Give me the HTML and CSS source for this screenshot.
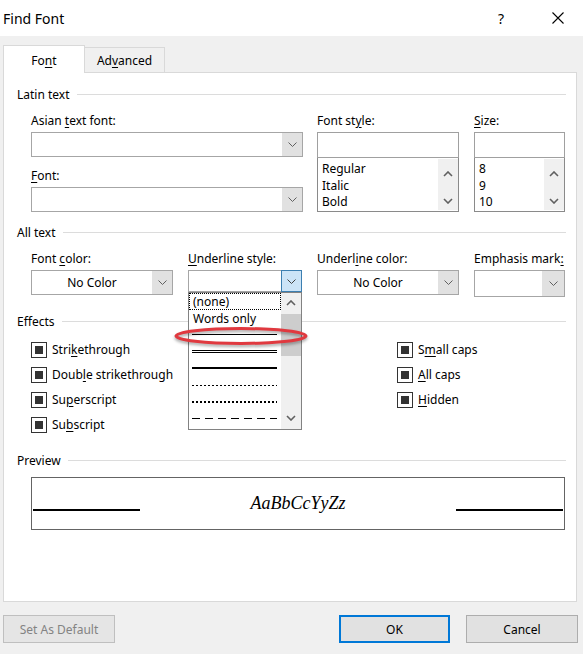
FILE: index.html
```html
<!DOCTYPE html>
<html>
<head>
<meta charset="utf-8">
<title>Find Font</title>
<link rel="stylesheet" href="styles.css">
</head>
<body>
<div class="titlebar">
  <span class="title">Find Font</span>
  <span class="help">?</span>
  <svg class="close" width="12" height="12" viewBox="0 0 12 12"><path d="M0.5 0.5L11.5 11.5M11.5 0.5L0.5 11.5" stroke="#000" stroke-width="1.1" fill="none"/></svg>
</div>

<div class="tabs">
  <div class="tab active">Fo<u>n</u>t</div>
  <div class="tab">Ad<u>v</u>anced</div>
</div>

<div class="panel">
  <div class="group-head"><span>Latin text</span><i></i></div>
  <div class="latin">
    <div class="c1">
      <label>Asian <u>t</u>ext font:</label>
      <div class="combo"><span class="val"></span><span class="cbtn"><svg width="9" height="5" viewBox="0 0 9 5"><path d="M0.5 0.5L4.5 4.5L8.5 0.5" fill="none" stroke="#606060"/></svg></span></div>
      <label class="second"><u>F</u>ont:</label>
      <div class="combo"><span class="val"></span><span class="cbtn"><svg width="9" height="5" viewBox="0 0 9 5"><path d="M0.5 0.5L4.5 4.5L8.5 0.5" fill="none" stroke="#606060"/></svg></span></div>
    </div>
    <div class="c2">
      <label>Font st<u>y</u>le:</label>
      <div class="edit"></div>
      <div class="list">
        <div class="items"><div>Regular</div><div>Italic</div><div>Bold</div></div>
        <div class="sb">
          <svg width="10" height="6" viewBox="0 0 10 6"><path d="M1 5L5 1L9 5" fill="none" stroke="#606060" stroke-width="1.6"/></svg>
          <svg width="10" height="6" viewBox="0 0 10 6"><path d="M1 1L5 5L9 1" fill="none" stroke="#606060" stroke-width="1.6"/></svg>
        </div>
      </div>
    </div>
    <div class="c3">
      <label><u>S</u>ize:</label>
      <div class="edit"></div>
      <div class="list">
        <div class="items"><div>8</div><div>9</div><div>10</div></div>
        <div class="sb">
          <svg width="10" height="6" viewBox="0 0 10 6"><path d="M1 5L5 1L9 5" fill="none" stroke="#606060" stroke-width="1.6"/></svg>
          <svg width="10" height="6" viewBox="0 0 10 6"><path d="M1 1L5 5L9 1" fill="none" stroke="#606060" stroke-width="1.6"/></svg>
        </div>
      </div>
    </div>
  </div>

  <div class="group-head gh-all"><span>All text</span><i></i></div>
  <div class="alltext">
    <div class="a1">
      <label>Font <u>c</u>olor:</label>
      <div class="combo"><span class="val">No Color</span><span class="cbtn"><svg width="9" height="5" viewBox="0 0 9 5"><path d="M0.5 0.5L4.5 4.5L8.5 0.5" fill="none" stroke="#606060"/></svg></span></div>
    </div>
    <div class="a2">
      <label><u>U</u>nderline style:</label>
      <div class="combo open"><span class="val"></span><span class="cbtn"><svg width="9" height="5" viewBox="0 0 9 5"><path d="M0.5 0.5L4.5 4.5L8.5 0.5" fill="none" stroke="#404040"/></svg></span>
        <div class="dropdown">
          <div class="dd-items">
            <div class="dd-row focus">(none)</div>
            <div class="dd-row">Words only</div>
            <div class="dd-row ln"><i class="l-single"></i></div>
            <div class="dd-row ln"><i class="l-double"></i></div>
            <div class="dd-row ln"><i class="l-thick"></i></div>
            <div class="dd-row ln"><i class="l-dot"></i></div>
            <div class="dd-row ln"><i class="l-dot2"></i></div>
            <div class="dd-row ln"><i class="l-dash"></i></div>
          </div>
          <div class="dd-sb">
            <svg width="10" height="6" viewBox="0 0 10 6"><path d="M1 5L5 1L9 5" fill="none" stroke="#606060" stroke-width="1.6"/></svg>
            <span class="thumb"></span>
            <span class="fill"></span>
            <svg width="10" height="6" viewBox="0 0 10 6"><path d="M1 1L5 5L9 1" fill="none" stroke="#606060" stroke-width="1.6"/></svg>
          </div>
        </div>
        <svg class="ring" width="136" height="22" viewBox="0 0 136 22"><ellipse cx="67" cy="9" rx="65" ry="7.5" fill="none" stroke="#e0393f" stroke-width="3"/></svg>
      </div>
    </div>
    <div class="a3">
      <label>Underl<u>i</u>ne color:</label>
      <div class="combo"><span class="val">No Color</span><span class="cbtn"><svg width="9" height="5" viewBox="0 0 9 5"><path d="M0.5 0.5L4.5 4.5L8.5 0.5" fill="none" stroke="#606060"/></svg></span></div>
    </div>
    <div class="a4">
      <label>Emphasis mark<u>:</u></label>
      <div class="combo emph"><span class="val"></span><span class="cbtn"><svg width="9" height="5" viewBox="0 0 9 5"><path d="M0.5 0.5L4.5 4.5L8.5 0.5" fill="none" stroke="#606060"/></svg></span></div>
    </div>
  </div>

  <div class="group-head gh-eff"><span>Effects</span><i></i></div>
  <div class="effects">
    <div class="cbcol">
      <div class="cb"><span class="box"><i></i></span><span>Stri<u>k</u>ethrough</span></div>
      <div class="cb"><span class="box"><i></i></span><span>Doub<u>l</u>e strikethrough</span></div>
      <div class="cb"><span class="box"><i></i></span><span>Su<u>p</u>erscript</span></div>
      <div class="cb"><span class="box"><i></i></span><span>Su<u>b</u>script</span></div>
    </div>
    <div class="cbcol">
      <div class="cb"><span class="box"><i></i></span><span>S<u>m</u>all caps</span></div>
      <div class="cb"><span class="box"><i></i></span><span><u>A</u>ll caps</span></div>
      <div class="cb"><span class="box"><i></i></span><span><u>H</u>idden</span></div>
    </div>
  </div>

  <div class="group-head gh-prev"><span>Preview</span><i></i></div>
  <div class="preview">
    <i class="pl"></i>
    <span class="sample">AaBbCcYyZz</span>
    <i class="pl"></i>
  </div>
</div>

<div class="footer">
  <div class="button disabled">Set As Default</div>
  <span class="spacer"></span>
  <div class="button ok">OK</div>
  <div class="button">Cancel</div>
</div>
</body>
</html>
```

FILE: styles.css
```css
* { box-sizing: border-box; }
html, body { margin: 0; padding: 0; }
body {
  width: 583px;
  height: 654px;
  overflow: hidden;
  background: #f0f0f0;
  font-family: "Segoe UI", "Noto Sans", "Open Sans", sans-serif;
  font-size: 12px;
  color: #000;
}
u { text-decoration: underline; text-underline-offset: 2px; text-decoration-thickness: 1px; }

/* title bar */
.titlebar {
  height: 36px;
  background: #fff;
  display: flex;
  align-items: center;
  padding-left: 3px;
}
.title { flex: 1; font-size: 14px; }
.help { font-size: 14px; margin-right: 48px; }
.close { margin-right: 19px; }

/* tabs */
.tabs {
  display: flex;
  padding-left: 3px;
  margin-top: 9px;
  height: 27px;
}
.tab {
  width: 80px;
  height: 25px;
  margin-top: 2px;
  border: 1px solid #d9d9d9;
  border-left: none;
  border-bottom: none;
  background: #f0f0f0;
  text-align: center;
  line-height: 23px;
  padding-top: 1px;
}
.tab.active {
  width: 82px;
  height: 28px;
  margin-top: 0;
  border-left: 1px solid #d9d9d9;
  background: #fff;
  line-height: 27px;
  position: relative;
  z-index: 2;
}

/* panel */
.panel {
  position: relative;
  z-index: 1;
  margin-left: 3px;
  width: 574px;
  height: 530px;
  background: #fff;
  border: 1px solid #d9d9d9;
  padding: 13px 10px 0 13px;
}
.group-head {
  display: flex;
  align-items: center;
  height: 16px;
}
.group-head span { display: block; line-height: 16px; padding-top: 2px; }
.group-head i {
  flex: 1;
  height: 1px;
  background: #dcdcdc;
  margin-left: 7px;
}
label { display: block; line-height: 16px; padding-top: 1px; margin-bottom: 3px; }

/* combo */
.combo {
  position: relative;
  display: flex;
  height: 25px;
  border: 1px solid #a6a6a6;
  background: #fff;
}
.combo .val { flex: 1; text-align: center; line-height: 22px; padding-top: 1px; }
.combo .cbtn {
  width: 20px;
  background: #e1e1e1;
  display: flex;
  align-items: center;
  justify-content: center;
}

/* latin row */
.latin { display: flex; margin: 10px 0 0 14px; }
.c1 { width: 272px; margin-right: 14px; }
.c2 { width: 142px; margin-right: 15px; }
.c3 { width: 91px; }
.second { margin-top: 10px; }
.edit { height: 26px; border: 1px solid #a0a0a0; background: #fff; }
.list {
  display: flex;
  height: 54px;
  border: 1px solid #8a8a8a;
  border-top: none;
}
.items { flex: 1; padding: 3px 0 0 4px; }
.items div { line-height: 16.5px; }
.sb {
  width: 20px;
  background: #f0f0f0;
  display: flex;
  flex-direction: column;
  align-items: center;
  justify-content: space-between;
  padding: 12px 0 6px;
  margin: 1px 0 1px;
}

/* all text */
.gh-all { margin-top: 12px; }
.alltext { display: flex; margin: 10px 0 0 14px; }
.a1 { width: 142px; margin-right: 15px; }
.a2 { width: 114px; margin-right: 15px; }
.a3 { width: 142px; margin-right: 15px; }
.a4 { width: 91px; }
.emph { height: 27px; }
.emph .cbtn { width: 22px; }
.combo.open { height: 22px; }
.combo.open .cbtn {
  background: #cce4f7;
  border: 1px solid #3c7fb1;
  margin: -1px -1px -1px 0;
  width: 21px;
}
.dropdown {
  position: absolute;
  top: 21px;
  left: -1px;
  width: 114px;
  height: 138px;
  border: 1px solid #828282;
  background: #fff;
  display: flex;
  z-index: 5;
}
.dd-items { flex: 1; }
.dd-row { height: 17px; line-height: 16px; padding: 1px 0 0 4px; }
.dd-row.focus { outline: 1px dotted #000; outline-offset: -1px; padding-left: 3px; border-left: 1px solid transparent; }
.dd-row.ln { padding: 6px 4px 0 3px; }
.dd-row.ln i { display: block; }
.l-single { height: 1px; margin-top: 1px; background: #000; }
.l-double { height: 3px; border-top: 1px solid #000; border-bottom: 1px solid #000; }
.l-thick { height: 2px; background: #000; }
.l-dot { height: 1px; margin-top: 1px; background: repeating-linear-gradient(90deg, #000 0 2px, transparent 2px 4px); }
.l-dot2 { height: 2px; background: repeating-linear-gradient(90deg, #000 0 2px, transparent 2px 4px); }
.l-dash { height: 1px; background: repeating-linear-gradient(90deg, #000 0 8px, transparent 8px 13px); }
.dd-sb {
  width: 20px;
  background: #f0f0f0;
  display: flex;
  flex-direction: column;
  align-items: center;
  padding: 7px 0 8px;
}
.dd-sb .thumb { width: 100%; height: 42px; margin-top: 8px; background: #cdcdcd; }
.dd-sb .fill { flex: 1; }
.ring {
  position: absolute;
  left: -15px;
  top: 56px;
  z-index: 6;
  filter: drop-shadow(0 2px 1.5px rgba(0, 0, 0, 0.35));
}

/* effects */
.gh-eff { margin-top: 16px; }
.effects { display: flex; margin: 8px 0 0 14px; }
.cbcol { width: 366px; }
.cbcol + .cbcol { width: auto; }
.cb { display: flex; align-items: center; height: 25px; }
.box {
  width: 16px;
  height: 16px;
  border: 1px solid #333;
  background: #fff;
  display: flex;
  align-items: center;
  justify-content: center;
  margin-right: 5px;
}
.box i { width: 8px; height: 8px; background: #333; }

/* preview */
.gh-prev { margin-top: 15px; }
.preview {
  margin: 9px 0 0 14px;
  width: 534px;
  height: 53px;
  border: 1px solid #646464;
  display: flex;
  justify-content: space-between;
  align-items: flex-start;
  padding: 0 1px;
}
.pl { display: block; width: 107px; height: 2px; background: #000; margin-top: 31px; }
.sample {
  font-family: "Liberation Serif", "Times New Roman", serif;
  font-style: italic;
  font-size: 18px;
  line-height: 51px;
}

/* footer */
.footer {
  display: flex;
  margin-top: 13px;
  padding: 0 5px 0 3px;
}
.spacer { flex: 1; }
.button {
  width: 112px;
  height: 28px;
  border: 1px solid #adadad;
  background: #e1e1e1;
  text-align: center;
  line-height: 25px;
  padding-top: 1px;
}
.button.disabled { color: #838383; border-color: #bfbfbf; background: #e5e5e5; }
.button.ok { width: 111px; margin-right: 16px; border: 2px solid #0078d7; line-height: 23px; }
```
